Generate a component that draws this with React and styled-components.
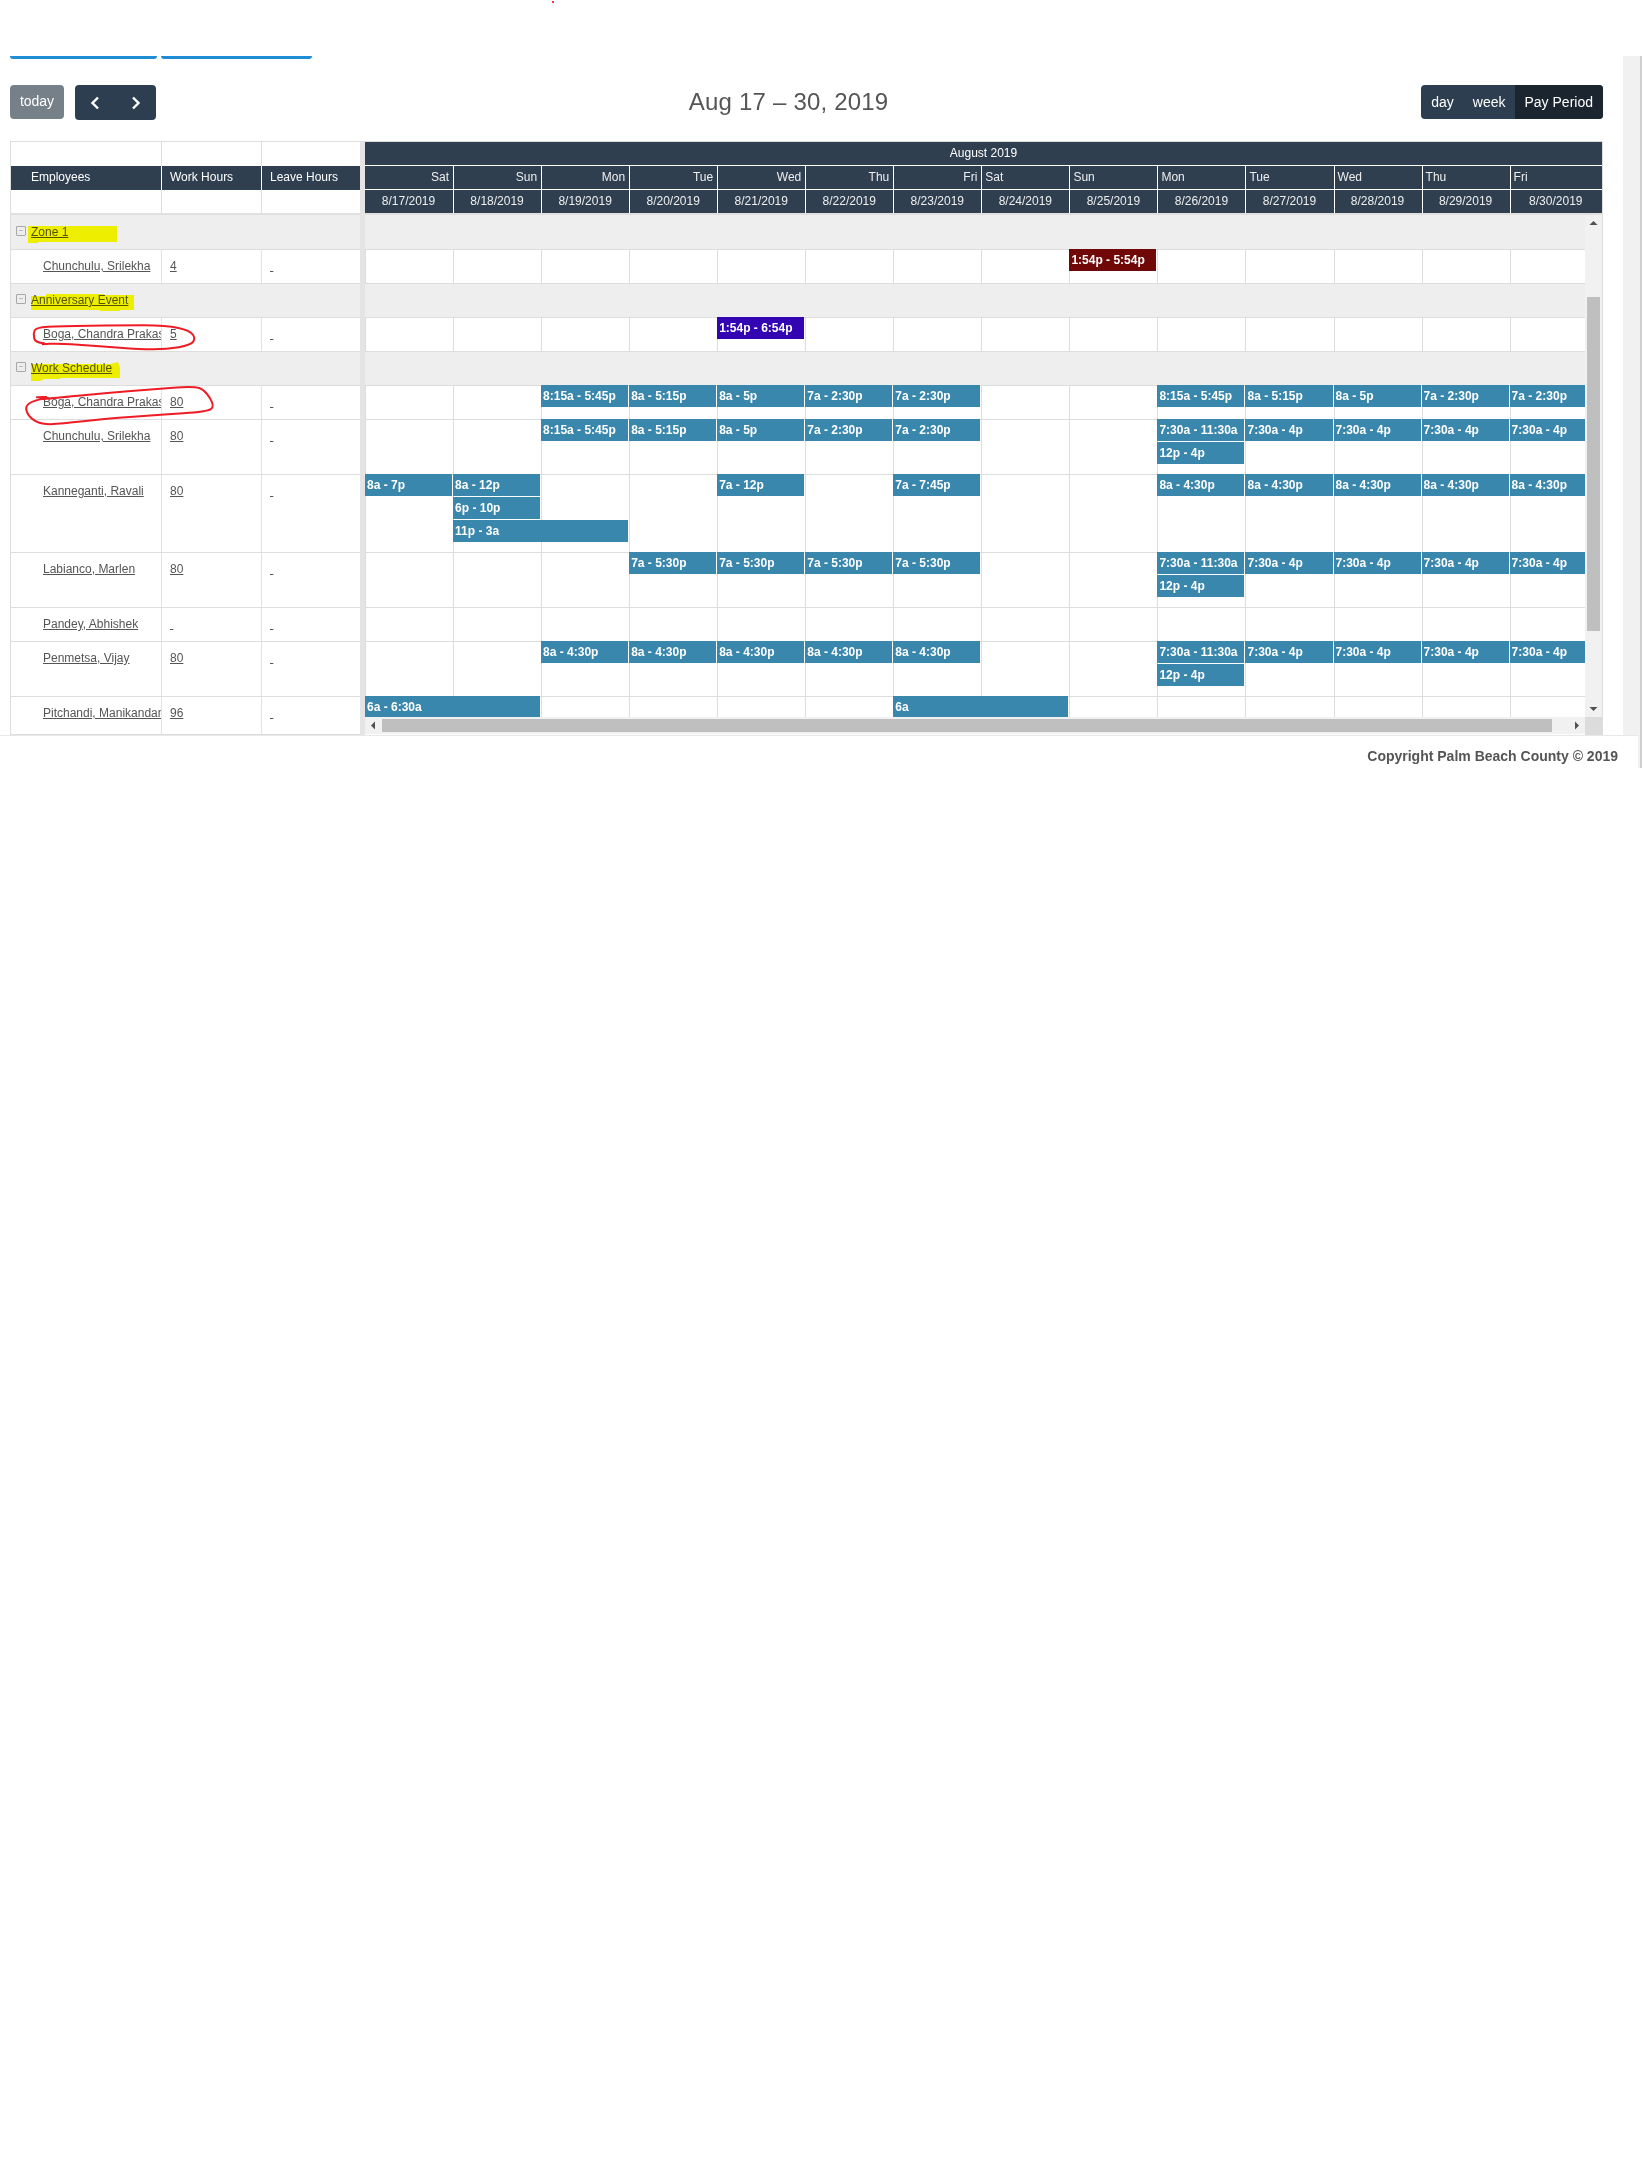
import React from "react";
import styled, { createGlobalStyle } from "styled-components";

const GlobalStyle = createGlobalStyle`
  html, body {
    margin: 0;
    padding: 0;
    background: #fff;
    font-family: "Liberation Sans", Arial, sans-serif;
    color: #555;
  }
`;

const dayNames = ["Sat", "Sun", "Mon", "Tue", "Wed", "Thu", "Fri", "Sat", "Sun", "Mon", "Tue", "Wed", "Thu", "Fri"];
const dates = [17, 18, 19, 20, 21, 22, 23, 24, 25, 26, 27, 28, 29, 30];

const BLUE = "#3a87ad";

const shift = (start, label, span = 1, lane = 0, color = BLUE) => ({ start, label, span, lane, color });
const week = (start, labels) => labels.map((l, i) => shift(start + i, l));

const rows = [
  { group: true, name: "Zone 1" },
  { name: "Chunchulu, Srilekha", work: "4", lanes: 1, events: [shift(8, "1:54p - 5:54p", 1, 0, "#700808")] },
  { group: true, name: "Anniversary Event" },
  { name: "Boga, Chandra Prakash", work: "5", lanes: 1, events: [shift(4, "1:54p - 6:54p", 1, 0, "#3204b2")] },
  { group: true, name: "Work Schedule" },
  {
    name: "Boga, Chandra Prakash",
    work: "80",
    lanes: 1,
    events: [
      ...week(2, ["8:15a - 5:45p", "8a - 5:15p", "8a - 5p", "7a - 2:30p", "7a - 2:30p"]),
      ...week(9, ["8:15a - 5:45p", "8a - 5:15p", "8a - 5p", "7a - 2:30p", "7a - 2:30p"]),
    ],
  },
  {
    name: "Chunchulu, Srilekha",
    work: "80",
    lanes: 2,
    events: [
      ...week(2, ["8:15a - 5:45p", "8a - 5:15p", "8a - 5p", "7a - 2:30p", "7a - 2:30p"]),
      ...week(9, ["7:30a - 11:30a", "7:30a - 4p", "7:30a - 4p", "7:30a - 4p", "7:30a - 4p"]),
      shift(9, "12p - 4p", 1, 1),
    ],
  },
  {
    name: "Kanneganti, Ravali",
    work: "80",
    lanes: 3,
    events: [
      shift(0, "8a - 7p"),
      shift(1, "8a - 12p"),
      shift(1, "6p - 10p", 1, 1),
      shift(1, "11p - 3a", 2, 2),
      shift(4, "7a - 12p"),
      shift(6, "7a - 7:45p"),
      ...week(9, ["8a - 4:30p", "8a - 4:30p", "8a - 4:30p", "8a - 4:30p", "8a - 4:30p"]),
    ],
  },
  {
    name: "Labianco, Marlen",
    work: "80",
    lanes: 2,
    events: [
      ...week(3, ["7a - 5:30p", "7a - 5:30p", "7a - 5:30p", "7a - 5:30p"]),
      ...week(9, ["7:30a - 11:30a", "7:30a - 4p", "7:30a - 4p", "7:30a - 4p", "7:30a - 4p"]),
      shift(9, "12p - 4p", 1, 1),
    ],
  },
  { name: "Pandey, Abhishek", lanes: 1, events: [] },
  {
    name: "Penmetsa, Vijay",
    work: "80",
    lanes: 2,
    events: [
      ...week(2, ["8a - 4:30p", "8a - 4:30p", "8a - 4:30p", "8a - 4:30p", "8a - 4:30p"]),
      ...week(9, ["7:30a - 11:30a", "7:30a - 4p", "7:30a - 4p", "7:30a - 4p", "7:30a - 4p"]),
      shift(9, "12p - 4p", 1, 1),
    ],
  },
  { name: "Pitchandi, Manikandan", work: "96", lanes: 2, events: [shift(0, "6a - 6:30a", 2), shift(6, "6a", 2)] },
];

const rowHeight = (r) => (r.group || r.lanes === 1 ? 34 : r.lanes * 23 + 9);

// turn hand-traced points into a soft pen stroke
const smooth = (pts) => {
  let d = `M${pts[0][0]} ${pts[0][1]}`;
  for (let i = 1; i < pts.length - 1; i++) {
    const mx = (pts[i][0] + pts[i + 1][0]) / 2;
    const my = (pts[i][1] + pts[i + 1][1]) / 2;
    d += ` Q${pts[i][0]} ${pts[i][1]} ${mx} ${my}`;
  }
  const last = pts[pts.length - 1];
  return `${d} L${last[0]} ${last[1]}`;
};

const circleOne = [
  [44, 343.3], [35, 342.7], [33.3, 333.3], [36, 327.3], [60, 326], [120, 325.3], [166.7, 325.3], [190, 330.7],
  [195.5, 338.3], [191, 345], [166.7, 349.3], [140, 349.3], [100, 346], [56.7, 343.3], [42.7, 344.3],
];
const circleTwo = [
  [37, 397.3], [53, 396], [30, 401.7], [25, 408.3], [30, 418.3], [43.3, 425], [70, 422.7], [120, 417.3],
  [160, 415], [206.7, 411.7], [215, 406.7], [205, 390], [193.3, 386], [153, 389.3], [103, 393.3], [53, 398.3], [40, 399.3],
];

const Page = styled.div`
  width: 1642px;
`;

const Shell = styled.div`
  display: flex;
  align-items: stretch;
`;

const Content = styled.div`
  width: 1623px;
  box-sizing: border-box;
  padding: 56px 20px 0 10px;
`;

const PageScrollbar = styled.div`
  flex: 1;
  margin-top: 56px;
  background: #f1f1f1;
  border-right: 2px solid #cfcfcf;
`;

const TabStrip = styled.div`
  display: flex;
  gap: 4px;
`;

const TabEdge = styled.div`
  width: ${(p) => p.$width}px;
  height: 3px;
  background: #1f8dd6;
  border-radius: 0 0 3px 3px;
`;

const RedSpeck = styled.span`
  position: absolute;
  left: 552px;
  top: 1px;
  width: 2px;
  height: 2px;
  background: #e8404a;
`;

const Toolbar = styled.div`
  display: flex;
  justify-content: space-between;
  align-items: flex-start;
  margin: 26px 0 22px;
  height: 34px;
`;

const LeftTools = styled.div`
  display: flex;
  gap: 11px;
`;

const Today = styled.div`
  width: 54px;
  height: 34px;
  line-height: 33px;
  text-align: center;
  font-size: 14px;
  color: #fff;
  background: #768089;
  border-radius: 4px;
`;

const NavGroup = styled.div`
  display: flex;
  width: 81px;
  height: 35px;
  background: #2c3e50;
  border-radius: 4px;
`;

const NavButton = styled.div`
  flex: 1;
  display: flex;
  align-items: center;
  justify-content: center;
`;

const Title = styled.h2`
  margin: 0;
  font-size: 24px;
  font-weight: 400;
  letter-spacing: 0.2px;
  line-height: 34px;
  color: #555;
`;

const ViewGroup = styled.div`
  display: flex;
  height: 34px;
  border-radius: 4px;
  overflow: hidden;
  background: #2c3e50;
`;

const ViewButton = styled.div`
  padding: 0 ${(p) => p.$pad}px;
  line-height: 34px;
  font-size: 14px;
  color: #fff;
  background: ${(p) => (p.$active ? "#1a252f" : "transparent")};
`;

const Calendar = styled.div`
  position: relative;
  display: flex;
  height: 593px;
  border-top: 1px solid #ddd;
`;

const LeftPane = styled.div`
  width: 350px;
  box-sizing: border-box;
  border-left: 1px solid #ddd;
  flex: none;
  overflow: hidden;
`;

const Divider = styled.div`
  width: 5px;
  flex: none;
  background: #e4e4e4;
`;

const RightPane = styled.div`
  flex: 1;
  min-width: 0;
  border-right: 1px solid #ddd;
  display: flex;
  flex-direction: column;
`;

const LeftHeaderRow = styled.div`
  display: grid;
  grid-template-columns: 151px 100px 98px;
  height: ${(p) => p.$height}px;
  background: ${(p) => (p.$dark ? "#2f3f50" : "#fff")};
`;

const LeftHeaderCell = styled.div`
  box-sizing: border-box;
  border-right: 1px solid ${(p) => (p.$dark ? "#fff" : "#ddd")};
  padding-left: ${(p) => p.$pad || 8}px;
  font-size: 12px;
  line-height: 23px;
  color: #fff;
  &:last-child {
    border-right: none;
  }
`;

const HeaderRule = styled.div`
  height: 2px;
  flex: none;
  background: #e0e0e0;
`;

const LeftBody = styled.div`
  height: 520px;
  overflow: hidden;
  border-bottom: 1px solid #ddd;
  box-sizing: border-box;
`;

const LeftRow = styled.div`
  display: grid;
  grid-template-columns: 151px 100px 98px;
  box-sizing: border-box;
  height: ${(p) => p.$height}px;
  border-top: 1px solid #ddd;
`;

const LeftCell = styled.div`
  box-sizing: border-box;
  padding: 9px 0 0 ${(p) => p.$pad || 8}px;
  border-right: 1px solid #e2e2e2;
  font-size: 12px;
  line-height: 14px;
  white-space: nowrap;
  overflow: hidden;
  &:last-child {
    border-right: none;
  }
`;

const GroupRow = styled.div`
  display: flex;
  align-items: flex-start;
  gap: 5px;
  box-sizing: border-box;
  height: 34px;
  padding: 9px 0 0 5px;
  background: #eee;
  border-top: 1px solid #ddd;
  font-size: 12px;
  line-height: 14px;
  &:first-child {
    border-top: none;
    padding-top: 10px;
  }
`;

const Collapse = styled.span`
  position: relative;
  box-sizing: border-box;
  width: 10px;
  height: 10px;
  margin-top: 1px;
  border: 1px solid #a8a8a8;
  border-radius: 1px;
  &::after {
    content: "";
    position: absolute;
    left: 2px;
    right: 2px;
    top: 3px;
    height: 1px;
    background: #bbb;
  }
`;

const Link = styled.span`
  color: #555;
  text-decoration: underline;
`;

const MonthRow = styled.div`
  height: 24px;
  flex: none;
  box-sizing: border-box;
  background: #2f3f50;
  border-bottom: 1px solid #fff;
  color: #fff;
  font-size: 12px;
  line-height: 23px;
  text-align: center;
`;

const HeaderGrid = styled.div`
  display: grid;
  flex: none;
  grid-template-columns: repeat(13, 88.05px) 1fr;
  height: ${(p) => (p.$last ? 23 : 24)}px;
  box-sizing: border-box;
  background: #2f3f50;
  border-bottom: ${(p) => (p.$last ? "none" : "1px solid #fff")};
`;

const DayCell = styled.div`
  box-sizing: border-box;
  border-left: 1px solid #fff;
  padding: 0 4px 0 3px;
  font-size: 12px;
  line-height: 23px;
  color: #eee;
  text-align: ${(p) => p.$align};
  &:first-child {
    border-left: none;
  }
`;

const BodyArea = styled.div`
  display: flex;
  height: 502px;
  flex: none;
`;

const Viewport = styled.div`
  width: 1220px;
  overflow: hidden;
  flex: none;
`;

const TimeRow = styled.div`
  display: grid;
  grid-template-columns: repeat(14, 88.05px);
  grid-template-rows: repeat(${(p) => p.$lanes}, 23px) 1fr;
  box-sizing: border-box;
  height: ${(p) => p.$height}px;
  border-top: 1px solid #ddd;
`;

const BandRow = styled.div`
  box-sizing: border-box;
  height: 34px;
  background: #eee;
  border-top: 1px solid #ddd;
  &:first-child {
    border-top: none;
  }
`;

const DaySlot = styled.div`
  grid-column: ${(p) => p.$col + 1};
  grid-row: 1 / -1;
  border-left: 1px solid #ddd;
`;

const Shift = styled.div`
  grid-column: ${(p) => p.$start + 1} / span ${(p) => p.$span};
  grid-row: ${(p) => p.$lane + 1};
  z-index: 1;
  height: 22px;
  margin: -1px 1px 0 0;
  padding-left: 2px;
  background: ${(p) => p.$color};
  color: #fff;
  font-size: 12px;
  font-weight: 700;
  line-height: 22px;
  white-space: nowrap;
  overflow: hidden;
`;

const VScroll = styled.div`
  width: 17px;
  flex: none;
  display: flex;
  flex-direction: column;
  align-items: center;
  justify-content: space-between;
  background: #f1f1f1;
  position: relative;
`;

const VThumb = styled.div`
  position: absolute;
  top: 82px;
  left: 2px;
  width: 13px;
  height: 334px;
  background: #bfbfbf;
`;

const HBar = styled.div`
  display: flex;
  height: 18px;
  flex: none;
`;

const HTrack = styled.div`
  width: 1220px;
  height: 17px;
  display: flex;
  align-items: flex-start;
  background: #f1f1f1;
`;

const HThumb = styled.div`
  width: 1170px;
  height: 13px;
  margin: 2px 16px 0 0;
  background: #bfbfbf;
`;

const Corner = styled.div`
  width: 17px;
  background: #dcdcdc;
`;

const ArrowBox = styled.div`
  width: 17px;
  height: 17px;
  flex: none;
  display: flex;
  align-items: center;
  justify-content: center;
`;

const FooterRow = styled.div`
  display: flex;
  height: 33px;
`;

const Footer = styled.div`
  flex: 1;
  box-sizing: border-box;
  border-top: 1px solid #e8e8e8;
  padding-right: 20px;
  text-align: right;
  font-size: 14px;
  font-weight: 700;
  line-height: 40px;
  color: #555;
`;

const FooterScroll = styled.div`
  width: 2px;
  background: #f1f1f1;
  border-right: 2px solid #cfcfcf;
`;

const Highlights = styled.svg`
  position: absolute;
  left: -10px;
  top: -142px;
  pointer-events: none;
  mix-blend-mode: multiply;
`;

const PenMarks = styled.svg`
  position: absolute;
  left: -10px;
  top: -142px;
  pointer-events: none;
`;

const Chevron = ({ d }) => (
  <svg width="10" height="14" viewBox="0 0 10 14">
    <path d={d} fill="none" stroke="#fff" strokeWidth="2.4" />
  </svg>
);

const Arrow = ({ d }) => (
  <ArrowBox>
    <svg width="9" height="9" viewBox="0 0 9 9">
      <path d={d} fill="#505050" />
    </svg>
  </ArrowBox>
);

const App = () => (
  <Page>
    <GlobalStyle />
    <RedSpeck />
    <Shell>
      <Content>
        <TabStrip>
          <TabEdge $width={147} />
          <TabEdge $width={151} />
        </TabStrip>
        <Toolbar>
          <LeftTools>
            <Today>today</Today>
            <NavGroup>
              <NavButton>
                <Chevron d="M8 1.5 L2.5 7 L8 12.5" />
              </NavButton>
              <NavButton>
                <Chevron d="M2 1.5 L7.5 7 L2 12.5" />
              </NavButton>
            </NavGroup>
          </LeftTools>
          <Title>Aug 17 – 30, 2019</Title>
          <ViewGroup>
            <ViewButton $pad={10}>day</ViewButton>
            <ViewButton $pad={9}>week</ViewButton>
            <ViewButton $pad={10} $active>
              Pay Period
            </ViewButton>
          </ViewGroup>
        </Toolbar>

        <Calendar>
          <LeftPane>
            <LeftHeaderRow $height={24}>
              <LeftHeaderCell />
              <LeftHeaderCell />
              <LeftHeaderCell />
            </LeftHeaderRow>
            <LeftHeaderRow $dark $height={24}>
              <LeftHeaderCell $dark $pad={20}>
                Employees
              </LeftHeaderCell>
              <LeftHeaderCell $dark>Work Hours</LeftHeaderCell>
              <LeftHeaderCell $dark>Leave Hours</LeftHeaderCell>
            </LeftHeaderRow>
            <LeftHeaderRow $height={23}>
              <LeftHeaderCell />
              <LeftHeaderCell />
              <LeftHeaderCell />
            </LeftHeaderRow>
            <HeaderRule />
            <LeftBody>
              {rows.map((r, i) =>
                r.group ? (
                  <GroupRow key={i}>
                    <Collapse />
                    <Link>{r.name}</Link>
                  </GroupRow>
                ) : (
                  <LeftRow key={i} $height={rowHeight(r)}>
                    <LeftCell $pad={32}>
                      <Link>{r.name}</Link>
                    </LeftCell>
                    <LeftCell>
                      <Link>{r.work || "\u00a0"}</Link>
                    </LeftCell>
                    <LeftCell>
                      <Link>{"\u00a0"}</Link>
                    </LeftCell>
                  </LeftRow>
                )
              )}
            </LeftBody>
          </LeftPane>
          <Divider />
          <RightPane>
            <MonthRow>August 2019</MonthRow>
            <HeaderGrid>
              {dayNames.map((d, i) => (
                <DayCell key={i} $align={i < 7 ? "right" : "left"}>
                  {d}
                </DayCell>
              ))}
            </HeaderGrid>
            <HeaderGrid $last>
              {dates.map((d) => (
                <DayCell key={d} $align="center">
                  8/{d}/2019
                </DayCell>
              ))}
            </HeaderGrid>
            <HeaderRule />
            <BodyArea>
              <Viewport>
                {rows.map((r, i) =>
                  r.group ? (
                    <BandRow key={i} />
                  ) : (
                    <TimeRow key={i} $lanes={r.lanes} $height={rowHeight(r)}>
                      {dates.map((d, c) => (
                        <DaySlot key={d} $col={c} />
                      ))}
                      {r.events.map((e, k) => (
                        <Shift key={k} $start={e.start} $span={e.span} $lane={e.lane} $color={e.color}>
                          {e.label}
                        </Shift>
                      ))}
                    </TimeRow>
                  )
                )}
              </Viewport>
              <VScroll>
                <VThumb />
                <Arrow d="M0.5 6 L4.5 2 L8.5 6 Z" />
                <Arrow d="M0.5 3 L4.5 7 L8.5 3 Z" />
              </VScroll>
            </BodyArea>
            <HBar>
              <HTrack>
                <Arrow d="M6 0.5 L2 4.5 L6 8.5 Z" />
                <HThumb />
                <Arrow d="M3 0.5 L7 4.5 L3 8.5 Z" />
              </HTrack>
              <Corner />
            </HBar>
          </RightPane>
          <Highlights width="400" height="500" viewBox="0 0 400 500">
            <g fill="#ffff00">
              <path d="M28 226 H117 V242 H38 V243 H28 Z" />
              <path d="M46 294 H104 V295 H134 V310 H120 V311 H100 V310 H31 V296 H46 Z" />
              <path d="M31 364 H110 L118 362 L120 368 V378 H60 V379 H44 L40 381 H31 Z" />
            </g>
          </Highlights>
          <PenMarks width="400" height="500" viewBox="0 0 400 500">
            <path d={smooth(circleOne)} fill="none" stroke="#ee1c25" strokeWidth="2" strokeLinecap="round" />
            <path d={smooth(circleTwo)} fill="none" stroke="#ee1c25" strokeWidth="2" strokeLinecap="round" />
          </PenMarks>
        </Calendar>
      </Content>
      <PageScrollbar />
    </Shell>
    <FooterRow>
      <Footer>Copyright Palm Beach County © 2019</Footer>
      <FooterScroll />
    </FooterRow>
  </Page>
);

export default App;
